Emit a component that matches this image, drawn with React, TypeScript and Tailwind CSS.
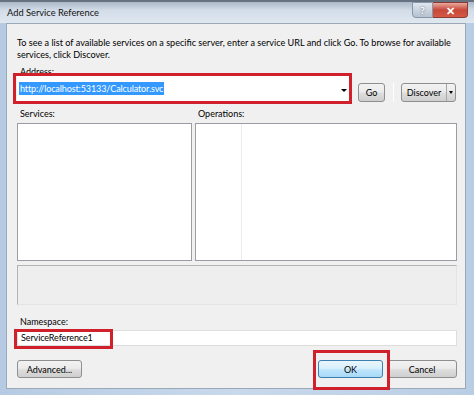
import React from 'react';

function WinButton({ label, className = '', focused = false }: { label: string; className?: string; focused?: boolean }) {
  return (
    <div
      className={
        'h-full flex items-center justify-center rounded-[3px] border text-[9px] leading-none ' +
        (focused
          ? 'border-[#3c7fb1] bg-[linear-gradient(#eaf6fd_0%,#d9f0fc_45%,#bee6fd_55%,#a7d9f5_100%)] '
          : 'border-[#8e8f8f] bg-[linear-gradient(#f2f2f2_0%,#ebebeb_45%,#dddddd_55%,#cfcfcf_100%)] ') +
        className
      }
    >
      {label}
    </div>
  );
}

export default function App() {
  return (
    <div className="w-[474px] h-[395px] overflow-hidden bg-[linear-gradient(90deg,#b6cbe3,#c9d9ec_50%,#b9cde4)] font-['Lato','Noto_Sans',sans-serif] text-black">
      {/* title bar */}
      <div className="h-[23px] flex items-start justify-between border-t-[2px] border-[#66727f] bg-[linear-gradient(#aab8c8,#d3dde8_40%,#dfe7ef)]">
        <div className="pl-[7px] pt-[5px] text-[9.3px] leading-[12px] text-[#111]">Add Service Reference</div>
        <div className="flex mr-[6px]">
          <div className="w-[21px] h-[16px] flex items-center justify-center rounded-bl-[4px] border border-[#8796a8] bg-[linear-gradient(#dfe6ee,#b5c2d1)] text-[10px] font-bold text-white [text-shadow:0_0_2px_#555]">
            ?
          </div>
          <div className="w-[35px] h-[16px] flex items-center justify-center rounded-br-[4px] border border-l-0 border-[#8a3b34] bg-[linear-gradient(#e9a99c,#c7483a_50%,#d45a44)] text-[11px] font-bold text-white leading-none">
            ✕
          </div>
        </div>
      </div>

      {/* client area */}
      <div className="ml-[6px] w-[460px] h-[366px] border border-[#9aa8b8] bg-[#f0f0f0] pl-[10px] pr-[8px] pt-[13px] text-[9px]">
        <div className="leading-[12px] whitespace-nowrap text-[9.1px]">
          To see a list of available services on a specific server, enter a service URL and click Go. To browse for available
          <br />
          services, click Discover.
        </div>

        <div className="mt-[5px] h-[12px] leading-[12px] pl-[3px]">Address:</div>

        {/* address row */}
        <div className="-mt-[2px] flex items-start">
          <div className="relative w-[332px] h-[25px] bg-white flex items-center pl-[2px]">
            <span className="bg-[#3399ff] text-white px-[1px] leading-[13px] tracking-[-0.1px]">
              http://localhost:53133/Calculator.svc
            </span>
            <div className="ml-auto mr-[2px] mt-[4px] w-0 h-0 border-l-[3px] border-r-[3px] border-t-[3px] border-l-transparent border-r-transparent border-t-black" />
            <div className="absolute -left-[4px] -top-[3px] -right-[3px] -bottom-[3px] border-[3px] border-[#d0202c]" />
          </div>
          <div className="ml-[9px] mt-[7px] h-[19px] w-[27px]">
            <WinButton label="Go" />
          </div>
          <div className="ml-[8px] mt-[7px] h-[19px] w-[1px] bg-[#d2d2d2] border-r border-white" />
          <div className="ml-[7px] mt-[7px] h-[19px] w-[55px] flex rounded-[3px] border border-[#8e8f8f] bg-[linear-gradient(#f2f2f2_0%,#ebebeb_45%,#dddddd_55%,#cfcfcf_100%)]">
            <div className="flex-1 flex items-center justify-center text-[9px] border-r border-[#a8a8a8]">Discover</div>
            <div className="w-[8px] flex items-center justify-center">
              <div className="w-0 h-0 border-l-[2px] border-r-[2px] border-t-[3px] border-l-transparent border-r-transparent border-t-black" />
            </div>
          </div>
        </div>

        {/* labels */}
        <div className="mt-[6px] flex h-[12px] leading-[12px]">
          <div className="w-[178px] pl-[3px]">Services:</div>
          <div className="pl-[3px]">Operations:</div>
        </div>

        {/* lists */}
        <div className="mt-[3px] flex gap-[3px] h-[138px]">
          <div className="w-[175px] h-full bg-white border border-[#9a9da3]" />
          <div className="w-[262px] h-full bg-white border border-[#9a9da3] flex">
            <div className="w-[46px] h-full border-r border-[#ececec]" />
          </div>
        </div>

        {/* status area */}
        <div className="mt-[4px] w-[440px] h-[40px] bg-[#eeeeee] border border-[#b4b4b4] border-b-[#e4e4e4] border-r-[#e4e4e4]" />

        <div className="mt-[11px] h-[12px] leading-[12px] pl-[3px]">Namespace:</div>

        <div className="mt-[2px] relative w-[440px] h-[16px] bg-white border border-[#dedede] flex items-center pl-[3px] tracking-[-0.1px]">
          ServiceReference1
          <div className="absolute -left-[4px] -top-[2px] w-[99px] h-[20px] border-[3px] border-[#d0202c]" />
        </div>

        {/* bottom buttons */}
        <div className="mt-[14px] flex h-[18px]">
          <div className="w-[65px] h-full">
            <WinButton label="Advanced..." />
          </div>
          <div className="ml-auto relative w-[65px] h-full">
            <WinButton label="OK" focused />
            <div className="absolute -left-[5px] -top-[10px] w-[77px] h-[40px] border-[3px] border-[#d0202c]" />
          </div>
          <div className="ml-[4px] w-[70px] h-full">
            <WinButton label="Cancel" />
          </div>
        </div>
      </div>
    </div>
  );
}
